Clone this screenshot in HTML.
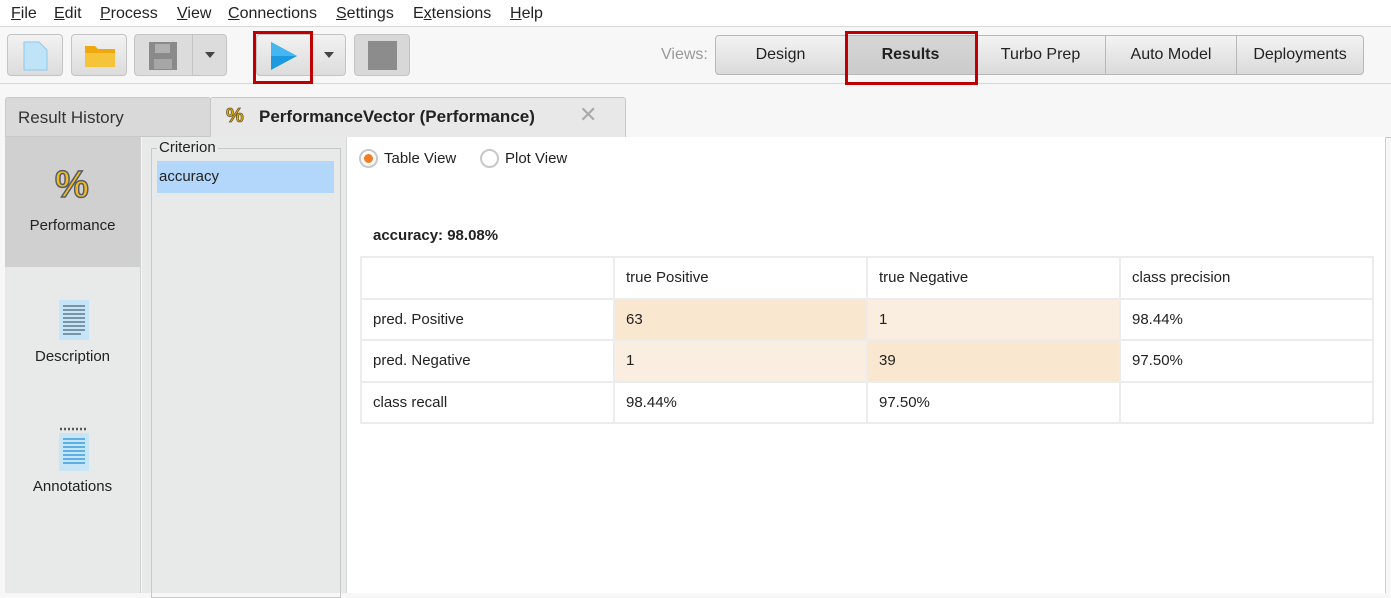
<!DOCTYPE html>
<html><head><meta charset="utf-8"><style>
*{box-sizing:border-box;margin:0;padding:0}
body{width:1391px;height:593px;position:relative;overflow:hidden;background:#f7f7f7;font-family:"Liberation Sans",sans-serif;color:#222}
.a{position:absolute}
.menu{font-size:16px;top:5px}
.menu u{text-decoration:underline}
.btn{position:absolute;top:34px;height:42px;border:1px solid #c4c4c4;border-radius:4px;background:linear-gradient(#f2f2f2,#dcdcdc)}
.vb{position:absolute;top:35px;height:40px;border:1px solid #b8b8b8;background:linear-gradient(#f3f3f3,#dadada);font-size:16px;text-align:center;line-height:38px;color:#222}
.red{position:absolute;border:3px solid #c00000}
table{border-collapse:collapse;position:absolute;left:360px;top:256px;font-size:15px;width:1014px;table-layout:fixed}
td{border:2px solid #ececec;height:41.5px;padding:0 0 0 11px;background:#fff}
.o1{background:#f9e7cf}.o2{background:#f9eee0}
.side{font-size:15px;text-align:center;width:135px;left:5px}
</style></head><body>
<div class="a" style="left:0;top:0;width:1391px;height:27px;background:#fff;border-bottom:1px solid #d8d8d8"></div>
<div class="a menu" style="left:11px"><u>F</u>ile</div>
<div class="a menu" style="left:54px"><u>E</u>dit</div>
<div class="a menu" style="left:100px"><u>P</u>rocess</div>
<div class="a menu" style="left:177px"><u>V</u>iew</div>
<div class="a menu" style="left:228px"><u>C</u>onnections</div>
<div class="a menu" style="left:336px"><u>S</u>ettings</div>
<div class="a menu" style="left:413px">E<u>x</u>tensions</div>
<div class="a menu" style="left:510px"><u>H</u>elp</div>
<div class="a" style="left:0;top:28px;width:1391px;height:56px;background:#f7f7f7;border-bottom:1px solid #d6d6d6"></div>
<div class="btn" style="left:7px;width:56px"><svg class="a" style="left:15px;top:6px" width="26" height="30"><path d="M1 1h15l8 8v20H1z" fill="#bfe3f7" stroke="#8ccbee"/></svg></div>
<div class="btn" style="left:71px;width:56px"><svg class="a" style="left:12px;top:9px" width="32" height="25"><path d="M1 2h10l3 3h17v18H1z" fill="#f0a80f"/><path d="M1 9h30v14H1z" fill="#f6c43b"/></svg></div>
<div class="btn" style="left:134px;width:93px;background:#dcdcdc"><svg class="a" style="left:13px;top:6px" width="30" height="30"><rect x="1" y="1" width="28" height="28" fill="#8a8a8a"/><rect x="7" y="3" width="15" height="9" fill="#b0b0b0"/><rect x="6" y="18" width="18" height="10" fill="#a6a6a6"/></svg><div class="a" style="left:57px;top:0;width:1px;height:40px;background:#c4c4c4"></div><div class="a" style="left:70px;top:17px;border:5px solid transparent;border-top:6px solid #444"></div></div>
<div class="btn" style="left:256px;width:90px"><svg class="a" style="left:12px;top:6px" width="30" height="30"><path d="M2 1L28 15L2 29z" fill="#1c9ae0"/><path d="M2 1L28 15L2 15z" fill="#45b6ef"/></svg><div class="a" style="left:67px;top:17px;border:5px solid transparent;border-top:6px solid #444"></div></div>
<div class="btn" style="left:354px;width:56px;background:#d8d8d8"><div class="a" style="left:13px;top:6px;width:29px;height:29px;background:#8c8c8c"></div></div>
<div class="red" style="left:253px;top:31px;width:60px;height:53px"></div>
<div class="a" style="left:661px;top:46px;font-size:16px;color:#999">Views:</div>
<div class="vb" style="left:715px;width:131px;border-radius:4px 0 0 4px">Design</div>
<div class="vb" style="left:845px;width:131px;background:linear-gradient(#d6d6d6,#cbcbcb);font-weight:bold">Results</div>
<div class="vb" style="left:975px;width:131px">Turbo Prep</div>
<div class="vb" style="left:1105px;width:132px">Auto Model</div>
<div class="vb" style="left:1236px;width:128px;border-radius:0 4px 4px 0">Deployments</div>
<div class="red" style="left:845px;top:31px;width:133px;height:54px"></div>
<div class="a" style="left:5px;top:97px;width:206px;height:40px;background:#d9d9d9;border:1px solid #c8c8c8;border-radius:3px 3px 0 0;font-size:17px;padding:10px 0 0 12px;color:#333">Result History</div>
<div class="a" style="left:210px;top:97px;width:416px;height:41px;background:#e8e8e8;border:1px solid #c8c8c8;border-bottom:none;border-radius:3px 3px 0 0"></div>
<div class="a" style="left:226px;top:105px;font-size:20px;font-weight:bold;color:#eab000;-webkit-text-stroke:0.8px #6a5a30">%</div>
<div class="a" style="left:259px;top:107px;font-size:17px;font-weight:bold">PerformanceVector (Performance)</div>
<div class="a" style="left:579px;top:102px;font-size:22px;color:#aaa">✕</div>
<div class="a" style="left:626px;top:137px;width:765px;height:1px;background:#c8c8c8"></div>
<div class="a" style="left:5px;top:137px;width:136px;height:456px;background:#e8e9e9;border-right:1px solid #d0d0d0"></div>
<div class="a" style="left:5px;top:137px;width:136px;height:130px;background:#d0d0d0"></div>
<div class="a" style="left:55px;top:165px;font-size:38px;font-weight:bold;color:#f5b820;-webkit-text-stroke:1.5px #55606a;line-height:40px">%</div>
<div class="a side" style="top:217px">Performance</div>
<svg class="a" style="left:57px;top:298px" width="32" height="42"><rect x="2" y="2" width="30" height="40" fill="#c6e6f7"/><g stroke="#4a6478" stroke-width="1.3"><path d="M6 8h22M6 12h22M6 16h22M6 20h22M6 24h22M6 28h22M6 32h22M6 36h18"/></g></svg>
<div class="a side" style="top:348px">Description</div>
<svg class="a" style="left:57px;top:427px" width="32" height="44"><path d="M3 2h2M7 2h2M11 2h2M15 2h2M19 2h2M23 2h2M27 2h2" stroke="#555" stroke-width="2.5"/><rect x="2" y="6" width="30" height="38" fill="#c6e6f7"/><g stroke="#1e90d8" stroke-width="1.3"><path d="M6 12h22M6 16h22M6 20h22M6 24h22M6 28h22M6 32h22M6 36h22"/></g></svg>
<div class="a side" style="top:478px">Annotations</div>
<div class="a" style="left:142px;top:137px;width:204px;height:456px;background:#e8eaea"></div>
<div class="a" style="left:151px;top:148px;width:190px;height:450px;border:1px solid #c8c8c8"></div>
<div class="a" style="left:157px;top:139px;font-size:15px;background:#e8eaea;padding:0 2px">Criterion</div>
<div class="a" style="left:157px;top:161px;width:177px;height:32px;background:#b3d7fb;font-size:15px;padding:7px 0 0 2px">accuracy</div>
<div class="a" style="left:346px;top:137px;width:1040px;height:456px;background:#fff;border-left:1px solid #d8d8d8;border-right:1px solid #cfcfcf"></div>
<div class="a" style="left:359px;top:149px;width:19px;height:19px;border-radius:50%;border:2px solid #c8c8c8;background:#fff"><div class="a" style="left:3px;top:3px;width:9px;height:9px;border-radius:50%;background:#f57c1f"></div></div>
<div class="a" style="left:384px;top:150px;font-size:15px">Table View</div>
<div class="a" style="left:480px;top:149px;width:19px;height:19px;border-radius:50%;border:2px solid #c8c8c8;background:#fff"></div>
<div class="a" style="left:505px;top:150px;font-size:15px">Plot View</div>
<div class="a" style="left:373px;top:227px;font-size:15px;font-weight:bold">accuracy: 98.08%</div>
<table>
<tr><td></td><td>true Positive</td><td>true Negative</td><td>class precision</td></tr>
<tr><td>pred. Positive</td><td class="o1">63</td><td class="o2">1</td><td>98.44%</td></tr>
<tr><td>pred. Negative</td><td class="o2">1</td><td class="o1">39</td><td>97.50%</td></tr>
<tr><td>class recall</td><td>98.44%</td><td>97.50%</td><td></td></tr>
</table>
</body></html>
